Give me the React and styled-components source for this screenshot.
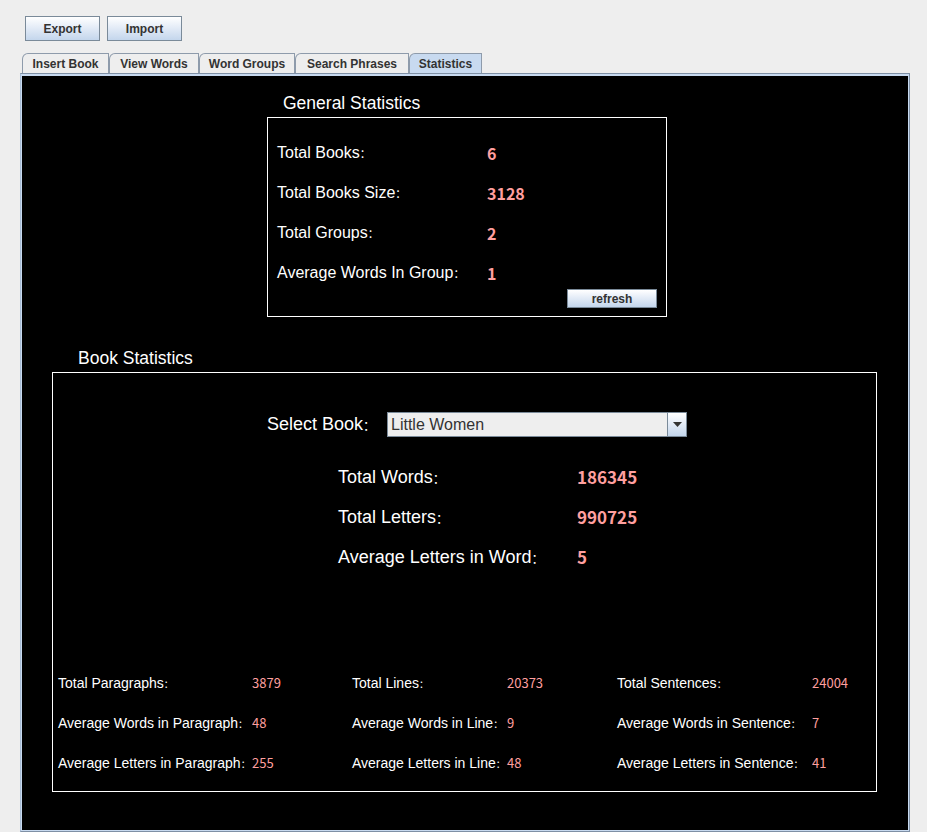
import React from 'react';
import styled, { createGlobalStyle } from 'styled-components';

const GlobalStyle = createGlobalStyle`
  html, body {
    margin: 0;
    padding: 0;
    background: #eeeeee;
    font-family: "Liberation Sans", Arial, sans-serif;
  }
`;

const Window = styled.div`
  width: 927px;
  height: 832px;
  overflow: hidden;
  display: flex;
  flex-direction: column;
`;

const Toolbar = styled.div`
  display: flex;
  gap: 7px;
  padding: 16px 0 0 25px;
`;

const SwingButton = styled.button`
  width: ${(p) => p.$w || 75}px;
  height: ${(p) => p.$h || 25}px;
  padding: 0;
  border: 1px solid #7a8a99;
  border-radius: 0;
  background: linear-gradient(#ffffff, #e4ecf7 45%, #c4d6ec);
  font-family: "Liberation Sans", Arial, sans-serif;
  font-weight: 700;
  font-size: 12px;
  color: #333333;
  cursor: pointer;
`;

const TabStrip = styled.div`
  display: flex;
  margin: 12px 0 0 22px;
  height: 20px;
  align-items: flex-end;
`;

const Tab = styled.div`
  box-sizing: border-box;
  width: ${(p) => p.$w}px;
  height: 20px;
  border: 1px solid #8e9bab;
  border-bottom: none;
  border-top-left-radius: 6px;
  background: ${(p) => (p.$active ? '#c8daf0' : '#eeeeee')};
  font-weight: 700;
  font-size: 12px;
  color: #333333;
  display: flex;
  align-items: center;
  justify-content: center;
  padding-top: 1px;
`;

const Panel = styled.div`
  box-sizing: border-box;
  margin-left: 20px;
  width: 890px;
  height: 759px;
  border: 1px solid #7f90a5;
  border-left-color: #a9bdd6;
  padding: 2px 1px 1px 1px;
  background: #c8daf0;
`;

const Screen = styled.div`
  height: 100%;
  background: #000000;
  display: flex;
  flex-direction: column;
`;

const SectionTitle = styled.div`
  height: 20px;
  line-height: 20px;
  margin: ${(p) => p.$top}px 0 ${(p) => p.$bottom}px ${(p) => p.$left}px;
  font-size: 17.5px;
  color: #ffffff;
`;

const Frame = styled.div`
  box-sizing: border-box;
  margin-left: ${(p) => p.$left}px;
  width: ${(p) => p.$w}px;
  height: ${(p) => p.$h}px;
  border: 1px solid #ffffff;
  display: flex;
  flex-direction: column;
`;

const StatRows = styled.div`
  display: grid;
  grid-template-columns: ${(p) => p.$label}px auto;
  grid-auto-rows: 32px;
  row-gap: 8px;
  margin: ${(p) => p.$top}px 0 0 ${(p) => p.$left}px;
`;

const Label = styled.div`
  font-size: ${(p) => p.$size}px;
  line-height: 32px;
  color: #ffffff;
  white-space: nowrap;
`;

const Colon = styled.span`
  font-family: "Noto Sans CJK SC", sans-serif;
  font-size: 0.7em;
`;

const Value = styled.div`
  font-family: "Noto Sans CJK SC", "Liberation Sans", sans-serif;
  font-size: ${(p) => p.$size}px;
  font-weight: ${(p) => (p.$bold ? 700 : 400)};
  line-height: 32px;
  color: #ff9f9f;
  white-space: nowrap;
`;

const RefreshRow = styled.div`
  display: flex;
  justify-content: flex-end;
  padding-right: 9px;
`;

const SelectRow = styled.div`
  display: flex;
  align-items: center;
  margin: 39px 0 0 214px;
  height: 25px;
`;

const SelectLabel = styled.div`
  width: 120px;
  font-size: 18px;
  color: #ffffff;
`;

const Combo = styled.div`
  box-sizing: border-box;
  width: 300px;
  height: 25px;
  border: 1px solid #7a8a99;
  background: #eeeeee;
  display: flex;
`;

const ComboText = styled.div`
  flex: 1;
  padding-left: 3px;
  font-size: 16px;
  line-height: 23px;
  color: #333333;
`;

const ComboArrow = styled.div`
  width: 18px;
  border-left: 1px solid #7a8a99;
  background: linear-gradient(#ffffff, #e4ecf7 45%, #c4d6ec);
  display: flex;
  align-items: center;
  justify-content: center;
`;

const DetailGrid = styled.div`
  display: grid;
  grid-template-columns: 194px 100px 155px 110px 195px auto;
  grid-auto-rows: 32px;
  row-gap: 8px;
  margin: 94px 0 0 5px;
`;

const general = [
  ['Total Books', '6'],
  ['Total Books Size', '3128'],
  ['Total Groups', '2'],
  ['Average Words In Group', '1'],
];

const book = [
  ['Total Words', '186345'],
  ['Total Letters', '990725'],
  ['Average Letters in Word', '5'],
];

const details = [
  ['Total Paragraphs', '3879', 'Total Lines', '20373', 'Total Sentences', '24004'],
  ['Average Words in Paragraph', '48', 'Average Words in Line', '9', 'Average Words in Sentence', '7'],
  ['Average Letters in Paragraph', '255', 'Average Letters in Line', '48', 'Average Letters in Sentence', '41'],
];

const tabs = [
  ['Insert Book', 87],
  ['View Words', 90],
  ['Word Groups', 96],
  ['Search Phrases', 114],
  ['Statistics', 73],
];

function Stat({ label, value, size, valueSize, bold }) {
  return (
    <>
      <Label $size={size}>
        {label}
        <Colon>：</Colon>
      </Label>
      <Value $size={valueSize} $bold={bold}>
        {value}
      </Value>
    </>
  );
}

export default function App() {
  return (
    <Window>
      <GlobalStyle />
      <Toolbar>
        <SwingButton>Export</SwingButton>
        <SwingButton>Import</SwingButton>
      </Toolbar>
      <TabStrip>
        {tabs.map(([name, w]) => (
          <Tab key={name} $w={w} $active={name === 'Statistics'}>
            {name}
          </Tab>
        ))}
      </TabStrip>
      <Panel>
        <Screen>
          <SectionTitle $top={17} $bottom={4} $left={261}>
            General Statistics
          </SectionTitle>
          <Frame $left={245} $w={400} $h={200}>
            <StatRows $label={210} $top={19} $left={9}>
              {general.map(([l, v]) => (
                <Stat key={l} label={l} value={v} size={16} valueSize={16} bold />
              ))}
            </StatRows>
            <RefreshRow>
              <SwingButton $w={90} $h={19}>refresh</SwingButton>
            </RefreshRow>
          </Frame>

          <SectionTitle $top={31} $bottom={4} $left={56}>
            Book Statistics
          </SectionTitle>
          <Frame $left={30} $w={825} $h={420}>
            <SelectRow>
              <SelectLabel>
                Select Book<Colon>：</Colon>
              </SelectLabel>
              <Combo>
                <ComboText>Little Women</ComboText>
                <ComboArrow>
                  <svg width="9" height="5" viewBox="0 0 9 5">
                    <path d="M0 0h9L4.5 5z" fill="#333" />
                  </svg>
                </ComboArrow>
              </Combo>
            </SelectRow>
            <StatRows $label={239} $top={24} $left={285}>
              {book.map(([l, v]) => (
                <Stat key={l} label={l} value={v} size={18} valueSize={17} bold />
              ))}
            </StatRows>
            <DetailGrid>
              {details.map((row) =>
                [0, 2, 4].map((i) => (
                  <Stat key={row[i]} label={row[i]} value={row[i + 1]} size={14} valueSize={13} />
                ))
              )}
            </DetailGrid>
          </Frame>
        </Screen>
      </Panel>
    </Window>
  );
}
